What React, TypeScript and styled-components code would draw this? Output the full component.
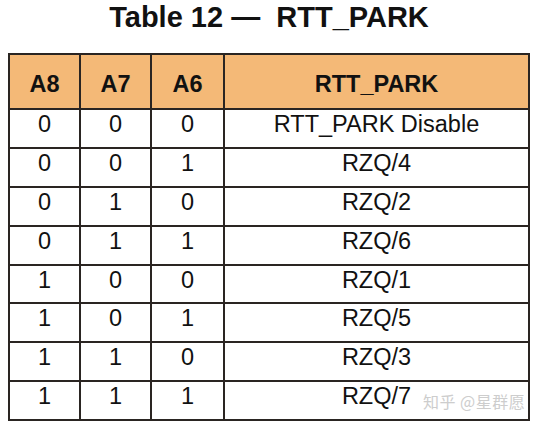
import React from 'react';
import styled, { createGlobalStyle } from 'styled-components';

const GlobalStyle = createGlobalStyle`
  html, body {
    margin: 0;
    padding: 0;
    background: #ffffff;
  }
  body {
    font-family: 'Liberation Sans', Arial, sans-serif;
    color: #111111;
  }
`;

const Page = styled.div`
  position: relative;
  width: 536px;
  height: 425px;
  padding: 0 6px 0 8px;
  box-sizing: border-box;
  overflow: hidden;
`;

const Title = styled.h1`
  margin: 0 0 19px;
  font-size: 29px;
  line-height: 34px;
  font-weight: 700;
  text-align: center;
  color: #111111;
`;

const Table = styled.table`
  width: 522px;
  border-collapse: collapse;
  table-layout: fixed;
  font-size: 23.5px;
`;

const HeadCell = styled.th<{ width?: number }>`
  width: ${(props) => (props.width ? `${props.width}px` : 'auto')};
  height: 55px;
  padding: 6px 0 0;
  box-sizing: border-box;
  background: #f4b977;
  border: 2px solid #2a2522;
  font-weight: 700;
  text-align: center;
  vertical-align: middle;
`;

const Row = styled.tr`
  height: 38.9px;
`;

const Cell = styled.td`
  padding: 0 0 9px;
  border: 2px solid #2a2522;
  text-align: center;
  vertical-align: middle;
  line-height: 26px;
`;

const Watermark = styled.div`
  position: absolute;
  left: 423px;
  top: 391px;
  font-family: 'Noto Sans CJK SC', 'Liberation Sans', sans-serif;
  font-size: 16px;
  line-height: 20px;
  color: #cdcdcd;
  letter-spacing: 0.5px;
  text-shadow: 0 0 2px #ffffff;
`;

const rows: [number, number, number, string][] = [
  [0, 0, 0, 'RTT_PARK Disable'],
  [0, 0, 1, 'RZQ/4'],
  [0, 1, 0, 'RZQ/2'],
  [0, 1, 1, 'RZQ/6'],
  [1, 0, 0, 'RZQ/1'],
  [1, 0, 1, 'RZQ/5'],
  [1, 1, 0, 'RZQ/3'],
  [1, 1, 1, 'RZQ/7'],
];

const App: React.FC = () => {
  return (
    <Page>
      <GlobalStyle />
      <Title>Table 12 —&nbsp;&nbsp;RTT_PARK</Title>
      <Table>
        <thead>
          <tr>
            <HeadCell width={71}>A8</HeadCell>
            <HeadCell width={71}>A7</HeadCell>
            <HeadCell width={73}>A6</HeadCell>
            <HeadCell>RTT_PARK</HeadCell>
          </tr>
        </thead>
        <tbody>
          {rows.map(([a8, a7, a6, value]) => (
            <Row key={value}>
              <Cell>{a8}</Cell>
              <Cell>{a7}</Cell>
              <Cell>{a6}</Cell>
              <Cell>{value}</Cell>
            </Row>
          ))}
        </tbody>
      </Table>
      <Watermark>知乎 @星群愿</Watermark>
    </Page>
  );
};

export default App;
